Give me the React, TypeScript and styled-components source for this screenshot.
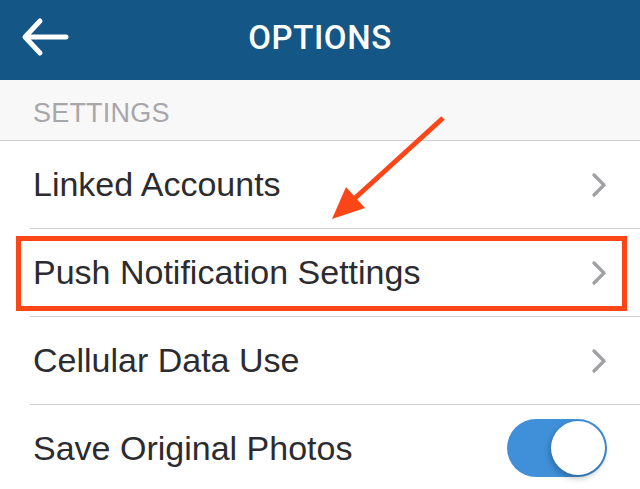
import { createGlobalStyle, styled } from "styled-components";

const GlobalStyle = createGlobalStyle`
  * { box-sizing: border-box; }
  body {
    margin: 0;
    background: #ffffff;
    font-family: "Liberation Sans", Arial, sans-serif;
  }
`;

const Screen = styled.div`
  position: relative;
  width: 640px;
  height: 489px;
  overflow: hidden;
  background: #ffffff;
`;

const Header = styled.header`
  height: 80px;
  background: #145787;
  display: grid;
  grid-template-columns: 1fr auto 1fr;
  align-items: center;
  padding: 0 0 6px 20px;
`;

const BackButton = styled.button`
  justify-self: start;
  background: none;
  border: 0;
  padding: 0;
  display: flex;
  align-items: center;
`;

const Title = styled.h1`
  margin: 0 0 0 -20px;
  color: #ffffff;
  font-family: Roboto, "Liberation Sans", sans-serif;
  font-size: 33px;
  font-weight: 500;
  letter-spacing: 0.6px;
`;

const SectionHeader = styled.div`
  height: 61px;
  background: #f8f8f8;
  border-bottom: 1px solid #cfcfd3;
  padding: 18px 0 0 33px;
  color: #a7a7ab;
  font-size: 27px;
  letter-spacing: 0.2px;
`;

const List = styled.ul`
  list-style: none;
  margin: 0;
  padding: 0 0 0 30px;
`;

const Row = styled.li<{ $highlight?: boolean }>`
  position: relative;
  height: 88px;
  display: flex;
  align-items: center;
  justify-content: space-between;
  padding: 0 33px 0 3px;
  border-bottom: 1px solid #cfcfd3;

  ${(props) =>
    props.$highlight &&
    `
    &::after {
      content: "";
      position: absolute;
      left: -14px;
      right: 13px;
      top: 7px;
      bottom: 5px;
      border: 5px solid #fc4618;
    }
  `}
`;

const Label = styled.span`
  color: #2c2c30;
  font-size: 34px;
`;

const Chevron = styled.svg`
  width: 16px;
  height: 26px;
`;

const Toggle = styled.div<{ $on: boolean }>`
  width: 100px;
  height: 58px;
  margin-top: -2px;
  border-radius: 29px;
  background: ${(props) => (props.$on ? "#3f8fd9" : "#e5e5ea")};
  display: flex;
  align-items: center;
  justify-content: ${(props) => (props.$on ? "flex-end" : "flex-start")};
  padding: 2px;
`;

const Knob = styled.div`
  width: 54px;
  height: 54px;
  border-radius: 50%;
  background: #ffffff;
  box-shadow: -1px 3px 6px rgba(0, 0, 0, 0.28);
`;

const Annotation = styled.svg`
  position: absolute;
  left: 0;
  top: 0;
  pointer-events: none;
`;

const ChevronIcon = () => (
  <Chevron viewBox="0 0 16 26">
    <path
      d="M3 3 L13 13 L3 23"
      fill="none"
      stroke="#a0a0a5"
      strokeWidth="3.4"
      strokeLinecap="round"
      strokeLinejoin="round"
    />
  </Chevron>
);

const rows = [
  { label: "Linked Accounts" },
  { label: "Push Notification Settings", highlight: true },
  { label: "Cellular Data Use" },
];

function App() {
  return (
    <Screen>
      <GlobalStyle />
      <Header>
        <BackButton aria-label="Back">
          <svg width="50" height="40" viewBox="0 0 50 40">
            <path
              d="M46 20 H6 M20 4 L5 20 L20 36"
              fill="none"
              stroke="#ffffff"
              strokeWidth="5"
              strokeLinecap="round"
              strokeLinejoin="round"
            />
          </svg>
        </BackButton>
        <Title>OPTIONS</Title>
        <span />
      </Header>
      <SectionHeader>SETTINGS</SectionHeader>
      <List>
        {rows.map((row) => (
          <Row key={row.label} $highlight={row.highlight}>
            <Label>{row.label}</Label>
            <ChevronIcon />
          </Row>
        ))}
        <Row>
          <Label>Save Original Photos</Label>
          <Toggle $on>
            <Knob />
          </Toggle>
        </Row>
      </List>
      <Annotation width="640" height="489">
        <line
          x1="443"
          y1="118"
          x2="354"
          y2="199"
          stroke="#fc4618"
          strokeWidth="5"
        />
        <polygon points="332,219 346,187 365,208" fill="#fc4618" />
      </Annotation>
    </Screen>
  );
}

export default App;
